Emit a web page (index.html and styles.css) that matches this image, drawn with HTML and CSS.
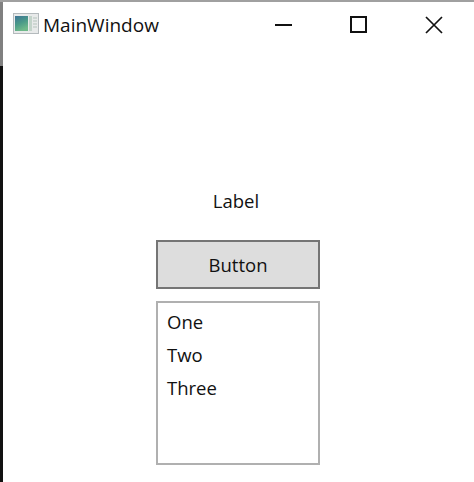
FILE: index.html
```html
<!DOCTYPE html>
<html lang="en">
<head>
    <meta charset="UTF-8">
    <meta name="viewport" content="width=device-width, initial-scale=1.0">
    <title>MainWindow</title>
    <link rel="stylesheet" href="styles.css">
</head>
<body>
    <div class="window">
        <div class="title-bar">
            <svg class="app-icon" width="26" height="21" viewBox="0 0 26 21">
                <defs>
                    <linearGradient id="pane" x1="0" y1="0" x2="0.4" y2="1">
                        <stop offset="0" stop-color="#3d7396"/>
                        <stop offset="0.55" stop-color="#4a9a88"/>
                        <stop offset="1" stop-color="#6fb98a"/>
                    </linearGradient>
                </defs>
                <rect x="0.5" y="0.5" width="25" height="20" fill="#e8eaea" stroke="#b4babd"/>
                <rect x="2" y="3" width="13" height="15" fill="url(#pane)"/>
                <rect x="16" y="3" width="3" height="15" fill="#c3d4ca"/>
                <path d="M20 5H24M20 8H24M20 11H24M20 14H24" stroke="#b5c4bc"/>
            </svg>
            <span class="title">MainWindow</span>
            <div class="window-buttons">
                <div class="window-button">
                    <svg width="18" height="18" viewBox="0 0 18 18"><path d="M0 9H17" stroke="#111" stroke-width="2"/></svg>
                </div>
                <div class="window-button">
                    <svg width="18" height="18" viewBox="0 0 18 18"><rect x="1" y="1" width="15" height="15" fill="none" stroke="#111" stroke-width="2"/></svg>
                </div>
                <div class="window-button">
                    <svg width="18" height="18" viewBox="0 0 18 18"><path d="M1 1L17 17M17 1L1 17" stroke="#111" stroke-width="1.7" fill="none"/></svg>
                </div>
            </div>
        </div>
        <div class="content">
            <div class="label">Label</div>
            <button class="main-button">Button</button>
            <ul class="list-box">
                <li>One</li>
                <li>Two</li>
                <li>Three</li>
            </ul>
        </div>
    </div>
</body>
</html>
```

FILE: styles.css
```css
html, body {
    margin: 0;
    height: 100%;
    background-color: #fff;
}
body {
    font-family: "Open Sans", "Noto Sans", sans-serif;
    color: #111;
    font-size: 19px;
}
.window {
    height: 482px;
    box-sizing: border-box;
    border-top: 2px solid #a0a0a0;
    padding-left: 3px;
    background: linear-gradient(#808080 64px, #111 64px) no-repeat;
    background-size: 3px 100%;
    overflow: hidden;
}
.title-bar {
    display: flex;
    align-items: center;
    height: 46px;
    padding-left: 10px;
}
.app-icon {
    margin-right: 4px;
    margin-top: -3px;
}
.window-buttons {
    display: flex;
    margin-left: auto;
    margin-right: 3px;
}
.window-button {
    width: 75px;
    display: flex;
    justify-content: center;
}
.content {
    display: flex;
    flex-direction: column;
    align-items: center;
    padding-top: 140px;
    padding-right: 1px;
    font-size: 18.5px;
}
.label {
    line-height: 26px;
    margin-bottom: 26px;
    margin-right: 4px;
}
.main-button {
    width: 164px;
    height: 49px;
    box-sizing: border-box;
    border: 2px solid #757575;
    background-color: #dddddd;
    font: inherit;
    color: inherit;
    padding: 0;
    margin-bottom: 12px;
}
.list-box {
    list-style: none;
    width: 164px;
    height: 164px;
    box-sizing: border-box;
    border: 2px solid #b0b0b0;
    margin: 0;
    padding: 2px 0 0 9px;
}
.list-box li {
    line-height: 33px;
}
```
